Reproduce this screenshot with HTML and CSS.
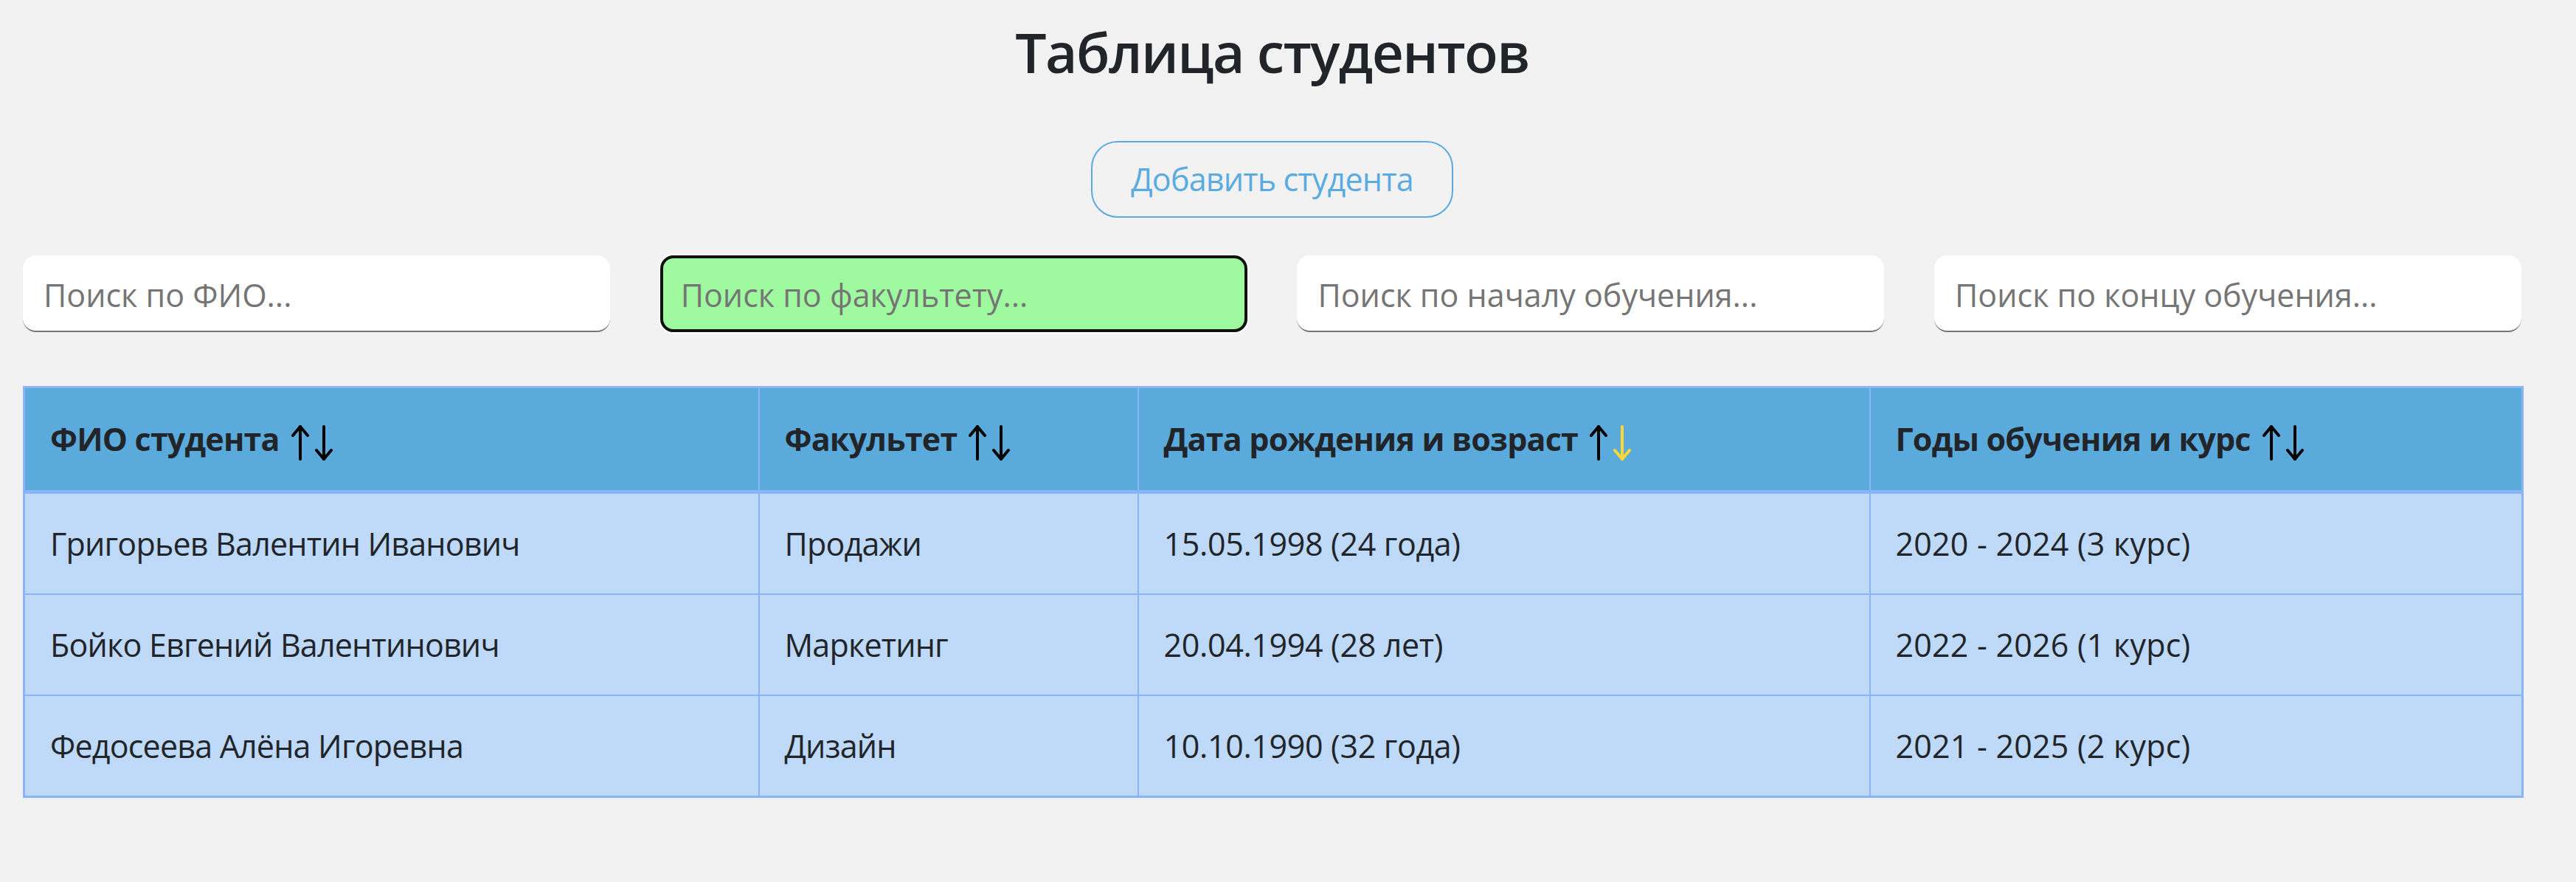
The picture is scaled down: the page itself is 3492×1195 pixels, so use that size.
FILE: index.html
```html
<!DOCTYPE html>
<html lang="ru">
<head>
<meta charset="utf-8">
<title>Таблица студентов</title>
<link rel="stylesheet" href="styles.css">
</head>
<body>
<div class="page">
  <h1 class="title">Таблица студентов</h1>
  <div class="actions">
    <button class="add-btn" type="button">Добавить студента</button>
  </div>
  <div class="filters">
    <input class="search" type="text" placeholder="Поиск по ФИО...">
    <input class="search search--active" type="text" placeholder="Поиск по факультету...">
    <input class="search" type="text" placeholder="Поиск по началу обучения...">
    <input class="search" type="text" placeholder="Поиск по концу обучения...">
  </div>
  <table class="students">
    <colgroup>
      <col class="col-name">
      <col class="col-faculty">
      <col class="col-birth">
      <col class="col-years">
    </colgroup>
    <thead>
      <tr>
        <th>ФИО студента<svg class="sort" viewBox="0 0 56 50"><g class="sort-up"><path d="M12 3V47"/><path d="M2 15L12 3L22 15"/></g><g class="sort-down"><path d="M44 3V47"/><path d="M34 35L44 47L54 35"/></g></svg></th>
        <th>Факультет<svg class="sort" viewBox="0 0 56 50"><g class="sort-up"><path d="M12 3V47"/><path d="M2 15L12 3L22 15"/></g><g class="sort-down"><path d="M44 3V47"/><path d="M34 35L44 47L54 35"/></g></svg></th>
        <th>Дата рождения и возраст<svg class="sort" viewBox="0 0 56 50"><g class="sort-up"><path d="M12 3V47"/><path d="M2 15L12 3L22 15"/></g><g class="sort-down sort-down--active"><path d="M44 3V47"/><path d="M34 35L44 47L54 35"/></g></svg></th>
        <th>Годы обучения и курс<svg class="sort" viewBox="0 0 56 50"><g class="sort-up"><path d="M12 3V47"/><path d="M2 15L12 3L22 15"/></g><g class="sort-down"><path d="M44 3V47"/><path d="M34 35L44 47L54 35"/></g></svg></th>
      </tr>
    </thead>
    <tbody>
      <tr>
        <td>Григорьев Валентин Иванович</td>
        <td>Продажи</td>
        <td class="cell-date">15.05.1998 (24 года)</td>
        <td class="cell-years">2020 - 2024 (3 курс)</td>
      </tr>
      <tr>
        <td>Бойко Евгений Валентинович</td>
        <td>Маркетинг</td>
        <td class="cell-date">20.04.1994 (28 лет)</td>
        <td class="cell-years">2022 - 2026 (1 курс)</td>
      </tr>
      <tr>
        <td>Федосеева Алёна Игоревна</td>
        <td>Дизайн</td>
        <td class="cell-date">10.10.1990 (32 года)</td>
        <td class="cell-years">2021 - 2025 (2 курс)</td>
      </tr>
    </tbody>
  </table>
</div>
</body>
</html>
```

FILE: styles.css
```css
html, body {
  margin: 0;
  padding: 0;
  background: #f2f2f2;
}

body {
  font-family: "Open Sans", "Noto Sans", sans-serif;
  color: #212529;
}

.page {
  width: 3387px;
  padding-left: 31px;
}

.title {
  margin: 0;
  padding-top: 23px;
  font-size: 75px;
  line-height: 94px;
  font-weight: 600;
  letter-spacing: -1.6px;
  text-align: center;
  color: #212529;
}

.actions {
  margin-top: 74px;
  display: flex;
  justify-content: center;
}

.add-btn {
  box-sizing: border-box;
  height: 104px;
  padding: 0 52px;
  border: 2px solid #5aabdf;
  border-radius: 36px;
  background: transparent;
  color: #5aabdf;
  font-family: "Open Sans", "Noto Sans", sans-serif;
  font-size: 43px;
  letter-spacing: -0.8px;
  line-height: 100px;
}

.filters {
  margin-top: 51px;
  display: flex;
  justify-content: space-between;
}

.search {
  box-sizing: border-box;
  width: 23.5%;
  height: 104px;
  margin: 0;
  padding: 4px 28px 0;
  border: none;
  border-bottom: 2px solid #767676;
  border-radius: 18px;
  background: #ffffff;
  font-family: "Open Sans", "Noto Sans", sans-serif;
  font-size: 43px;
  color: #212529;
  outline: none;
}

.search::placeholder {
  color: #757575;
}

.search--active {
  background: #9ffa9f;
  outline: 4.5px solid #111111;
  outline-offset: -4.5px;
  box-shadow: 0 0 0 2px #ffffff;
}

.students {
  margin-top: 73px;
  width: 3387px;
  table-layout: fixed;
  border-collapse: collapse;
  border: 3px solid #8ab4f8;
}

.col-name { width: 996px; }
.col-faculty { width: 514px; }
.col-birth { width: 992px; }
.col-years { width: 885px; }

.students th,
.students td {
  border: 2px solid #8ab4f8;
  text-align: left;
  font-size: 43px;
  letter-spacing: -0.8px;
  padding: 0 34px;
  white-space: nowrap;
}

.students th {
  background: #5baadc;
  font-weight: 700;
  line-height: 60px;
  padding-top: 39px;
  padding-bottom: 39px;
  border-bottom-width: 5px;
}

.students td {
  background: #bfd9f8;
  font-weight: 400;
  line-height: 59px;
  padding-top: 38px;
  padding-bottom: 38px;
}

.students td.cell-date {
  letter-spacing: -0.35px;
}

.students td.cell-years {
  letter-spacing: 0.2px;
}

.sort {
  width: 56px;
  height: 50px;
  margin-left: 16px;
  vertical-align: -14px;
  fill: none;
  stroke-width: 4px;
  stroke-linecap: round;
  stroke-linejoin: round;
}

.sort-up,
.sort-down {
  stroke: #000000;
}

.sort-down--active {
  stroke: #fdd835;
}
```
